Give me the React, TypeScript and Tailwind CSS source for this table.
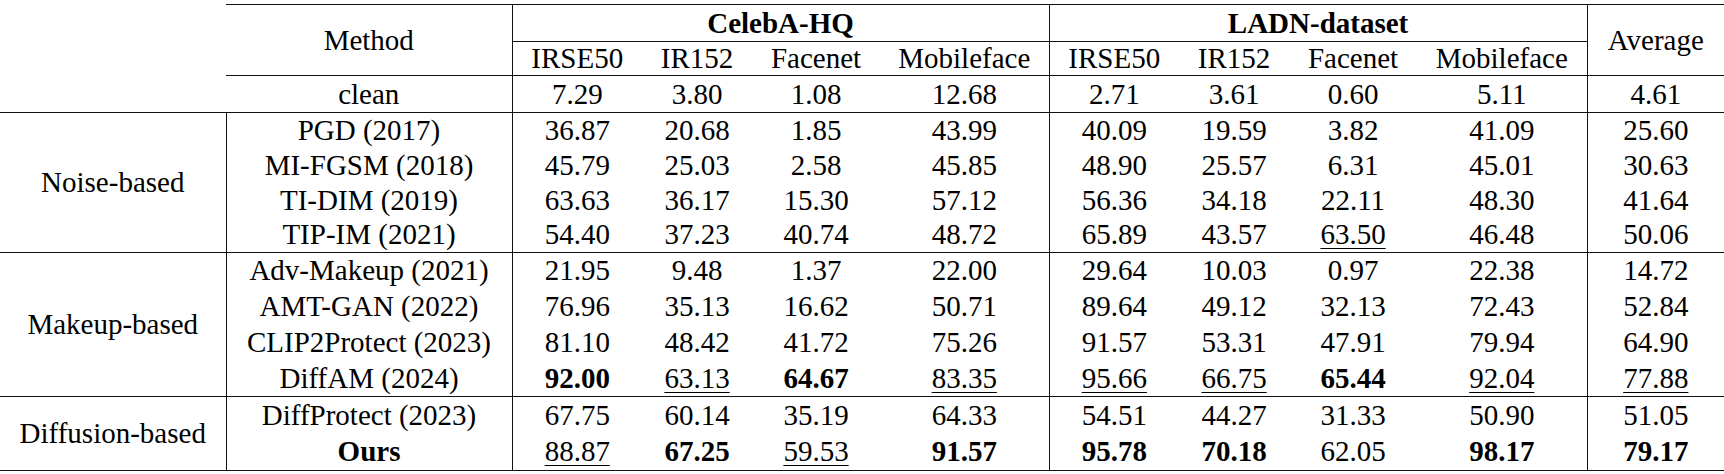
const subs = ["IRSE50", "IR152", "Facenet", "Mobileface"];

type Row = { name: string; cells: string[]; bold?: boolean };

// "*" = bold, "_" = underlined
const clean: Row = { name: "clean", cells: ["7.29", "3.80", "1.08", "12.68", "2.71", "3.61", "0.60", "5.11", "4.61"] };

const groups: { label: string; rowH: string; rows: Row[] }[] = [
  {
    label: "Noise-based",
    rowH: "h-[35px]",
    rows: [
      { name: "PGD (2017)", cells: ["36.87", "20.68", "1.85", "43.99", "40.09", "19.59", "3.82", "41.09", "25.60"] },
      { name: "MI-FGSM (2018)", cells: ["45.79", "25.03", "2.58", "45.85", "48.90", "25.57", "6.31", "45.01", "30.63"] },
      { name: "TI-DIM (2019)", cells: ["63.63", "36.17", "15.30", "57.12", "56.36", "34.18", "22.11", "48.30", "41.64"] },
      { name: "TIP-IM (2021)", cells: ["54.40", "37.23", "40.74", "48.72", "65.89", "43.57", "_63.50", "46.48", "50.06"] },
    ],
  },
  {
    label: "Makeup-based",
    rowH: "h-[36px]",
    rows: [
      { name: "Adv-Makeup (2021)", cells: ["21.95", "9.48", "1.37", "22.00", "29.64", "10.03", "0.97", "22.38", "14.72"] },
      { name: "AMT-GAN (2022)", cells: ["76.96", "35.13", "16.62", "50.71", "89.64", "49.12", "32.13", "72.43", "52.84"] },
      { name: "CLIP2Protect (2023)", cells: ["81.10", "48.42", "41.72", "75.26", "91.57", "53.31", "47.91", "79.94", "64.90"] },
      { name: "DiffAM (2024)", cells: ["*92.00", "_63.13", "*64.67", "_83.35", "_95.66", "_66.75", "*65.44", "_92.04", "_77.88"] },
    ],
  },
  {
    label: "Diffusion-based",
    rowH: "h-[37px]",
    rows: [
      { name: "DiffProtect (2023)", cells: ["67.75", "60.14", "35.19", "64.33", "54.51", "44.27", "31.33", "50.90", "51.05"] },
      { name: "Ours", bold: true, cells: ["_88.87", "*67.25", "_59.53", "*91.57", "*95.78", "*70.18", "62.05", "*98.17", "*79.17"] },
    ],
  },
];

// serif face on every cell; important so no outside table rule wins
const cell = "p-0 text-center text-[29px] leading-none [font-family:'Liberation_Serif']!";

const Val = ({ v }: { v: string }) => {
  if (v.startsWith("*")) return <span className="font-bold">{v.slice(1)}</span>;
  if (v.startsWith("_"))
    return <span className="underline decoration-1 underline-offset-[4px]">{v.slice(1)}</span>;
  return <>{v}</>;
};

const DataCells = ({ cells, last }: { cells: string[]; last?: boolean }) => (
  <>
    {cells.map((c, i) => (
      <td
        key={i}
        className={`${cell} ${i === 3 || i === 7 ? "border-r border-[#111]" : ""} ${last ? "border-b border-[#111]" : ""}`}
      >
        <Val v={c} />
      </td>
    ))}
  </>
);

export default function App() {
  return (
    <div className="bg-white w-[1724px] h-[474px] pt-[4px] text-black [font-family:'Liberation_Serif']">
      <table className="table-fixed border-collapse w-[1724px] [font-family:'Liberation_Serif']! text-[29px] leading-none text-black">
        <colgroup>
          <col className="w-[226px]" />
          <col className="w-[286px]" />
          <col className="w-[130px]" />
          <col className="w-[110px]" />
          <col className="w-[128px]" />
          <col className="w-[169px]" />
          <col className="w-[130px]" />
          <col className="w-[110px]" />
          <col className="w-[128px]" />
          <col className="w-[170px]" />
          <col className="w-[137px]" />
        </colgroup>
        <thead>
          <tr className="h-[37px]">
            <td className={cell} />
            <td rowSpan={2} className={`${cell} border-t border-b border-r border-[#111]`}>
              Method
            </td>
            <td colSpan={4} className={`${cell} font-bold border-t border-b border-r border-[#111]`}>
              CelebA-HQ
            </td>
            <td colSpan={4} className={`${cell} font-bold border-t border-b border-r border-[#111]`}>
              LADN-dataset
            </td>
            <td rowSpan={2} className={`${cell} border-t border-b border-[#111]`}>
              Average
            </td>
          </tr>
          <tr className="h-[34px]">
            <td className={cell} />
            {[...subs, ...subs].map((s, i) => (
              <td
                key={i}
                className={`${cell} border-b border-[#111] ${i === 3 || i === 7 ? "border-r" : ""}`}
              >
                {s}
              </td>
            ))}
          </tr>
        </thead>
        <tbody>
          <tr className="h-[37px]">
            <td className={`${cell} border-b border-[#111]`} />
            <td className={`${cell} border-r border-b border-[#111]`}>{clean.name}</td>
            <DataCells cells={clean.cells} last />
          </tr>
          {groups.map((g) =>
            g.rows.map((r, ri) => {
              const last = ri === g.rows.length - 1;
              return (
                <tr key={r.name} className={g.rowH}>
                  {ri === 0 && (
                    <td rowSpan={g.rows.length} className={`${cell} border-r border-b border-[#111]`}>
                      {g.label}
                    </td>
                  )}
                  <td
                    className={`${cell} border-r border-[#111] ${r.bold ? "font-bold" : ""} ${last ? "border-b" : ""}`}
                  >
                    {r.name}
                  </td>
                  <DataCells cells={r.cells} last={last} />
                </tr>
              );
            })
          )}
        </tbody>
      </table>
    </div>
  );
}
